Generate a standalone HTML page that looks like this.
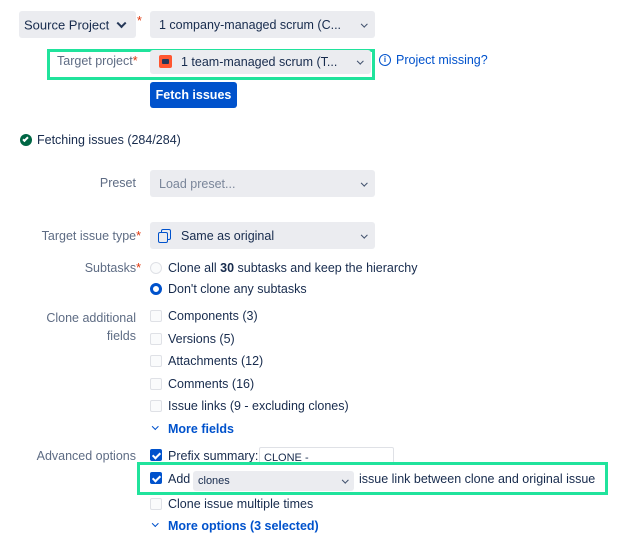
<!DOCTYPE html>
<html><head><meta charset="utf-8"><style>
*{box-sizing:border-box;margin:0;padding:0}
body{width:636px;height:543px;background:#fff;font-family:"Liberation Sans",sans-serif;font-size:12.5px;color:#172b4d;position:relative;overflow:hidden}
.a{position:absolute;white-space:nowrap}
.lbl{position:absolute;color:#5e6c84;text-align:right;white-space:nowrap}
.sel{position:absolute;background:#ebecf0;border-radius:3px}
.sel .t{position:absolute;left:9px;top:50%;transform:translateY(-50%)}
.chev{position:absolute;right:9px;top:50%;width:4.5px;height:4.5px;border-right:1.6px solid #42526e;border-bottom:1.6px solid #42526e;transform:translateY(-75%) rotate(45deg)}
.req{color:#de350b}
.cb{position:absolute;width:12px;height:12px;border:1px solid #dfe1e6;border-radius:2px;background:#fafbfc}
.cbx{position:absolute;width:12px;height:12px;border-radius:2px;background:#0052cc}
.cbx:after{content:"";position:absolute;left:4px;top:1.5px;width:3px;height:6px;border-right:2px solid #fff;border-bottom:2px solid #fff;transform:rotate(45deg)}
.blue{color:#0052cc}
.bold{font-weight:bold}
.g{position:absolute;border:3px solid #20e39c}
</style></head><body>

<div class="sel" style="left:19px;top:11px;width:117px;height:27px"><span class="t" style="left:5px;font-size:13px">Source Project</span><div class="chev" style="right:11px;width:7px;height:7px;border-width:2.2px;border-color:#253858"></div></div>
<span class="a req" style="left:137px;top:14px">*</span>
<div class="sel" style="left:150px;top:11px;width:225px;height:27px"><span class="t">1 company-managed scrum (C...</span><div class="chev"></div></div>

<div class="g" style="left:47px;top:49px;width:328px;height:31px"></div>
<span class="a" style="left:57px;top:54px;color:#5e6c84">Target project<span class="req">*</span></span>
<div class="sel" style="left:150px;top:50px;width:221px;height:24px">
<div style="position:absolute;left:9px;top:5px;width:13px;height:13px;background:#ff5630;border-radius:2px"><div style="position:absolute;left:3px;top:4px;width:7px;height:5px;background:#253858;border-radius:1px"></div></div>
<span class="t" style="left:31px">1 team-managed scrum (T...</span><div class="chev"></div></div>
<div class="a" style="left:379px;top:54px;width:12px;height:12px;border:1.3px solid #0052cc;border-radius:50%;font-size:8px;line-height:10px;text-align:center;color:#0052cc;font-weight:bold">i</div>
<span class="a blue" style="left:396px;top:53px">Project missing?</span>

<div class="a" style="left:150px;top:82px;width:87px;height:26px;background:#0052cc;border-radius:3px;color:#fff;font-weight:bold;text-align:center;line-height:26px">Fetch issues</div>

<div class="a" style="left:20px;top:134px;width:12px;height:12px;border-radius:50%;background:#006644"><div style="position:absolute;left:4px;top:2px;width:3px;height:6px;border-right:2px solid #fff;border-bottom:2px solid #fff;transform:rotate(45deg)"></div></div>
<span class="a" style="left:37px;top:133px">Fetching issues (284/284)</span>

<span class="lbl" style="right:500px;top:176px">Preset</span>
<div class="sel" style="left:150px;top:170px;width:225px;height:27px"><span class="t" style="color:#7a869a">Load preset...</span><div class="chev"></div></div>

<span class="lbl" style="right:495px;top:229px">Target issue type<span class="req">*</span></span>
<div class="sel" style="left:150px;top:222px;width:225px;height:27px">
<div style="position:absolute;left:11px;top:7px;width:10px;height:11px;border:1.5px solid #0052cc;border-radius:2px"></div>
<div style="position:absolute;left:8px;top:10px;width:10px;height:11px;border:1.5px solid #0052cc;border-radius:2px;background:#ebecf0"></div>
<span class="t" style="left:31px">Same as original</span><div class="chev"></div></div>

<span class="lbl" style="right:495px;top:261px">Subtasks<span class="req">*</span></span>
<div class="a" style="left:150px;top:262px;width:12px;height:12px;border:1px solid #dfe1e6;border-radius:50%;background:#fafbfc"></div>
<span class="a" style="left:168px;top:261px">Clone all <b>30</b> subtasks and keep the hierarchy</span>
<div class="a" style="left:150px;top:283px;width:12px;height:12px;border:3.5px solid #0052cc;border-radius:50%;background:#fff"></div>
<span class="a" style="left:168px;top:282px">Don't clone any subtasks</span>

<span class="lbl" style="right:500px;top:309px;line-height:18px">Clone additional<br>fields</span>
<div class="cb" style="left:150px;top:310px"></div><span class="a" style="left:168px;top:309px">Components (3)</span>
<div class="cb" style="left:150px;top:333px"></div><span class="a" style="left:168px;top:332px">Versions (5)</span>
<div class="cb" style="left:150px;top:355px"></div><span class="a" style="left:168px;top:354px">Attachments (12)</span>
<div class="cb" style="left:150px;top:378px"></div><span class="a" style="left:168px;top:377px">Comments (16)</span>
<div class="cb" style="left:150px;top:400px"></div><span class="a" style="left:168px;top:399px">Issue links (9 - excluding clones)</span>
<div class="a" style="left:153px;top:424px;width:4.5px;height:4.5px;border-right:1.6px solid #0052cc;border-bottom:1.6px solid #0052cc;transform:rotate(45deg)"></div>
<span class="a blue bold" style="left:168px;top:422px">More fields</span>

<span class="lbl" style="right:500px;top:449px">Advanced options</span>
<div class="cbx" style="left:150px;top:449px"></div>
<span class="a" style="left:168px;top:449px">Prefix summary:</span>
<div class="a" style="left:259px;top:447px;width:135px;height:20px;border:1px solid #dfe1e6;border-radius:2px;font-size:11px;padding:4px 0 0 4px">CLONE -</div>

<div class="g" style="left:137px;top:462px;width:471px;height:33px;background:#fff"></div>
<div class="cbx" style="left:150px;top:472px"></div>
<span class="a" style="left:168px;top:472px">Add</span>
<div class="sel" style="left:193px;top:471px;width:161px;height:20px"><span class="t" style="left:5px;font-size:11px">clones</span><div class="chev" style="right:7px"></div></div>
<span class="a" style="left:359px;top:472px">issue link between clone and original issue</span>

<div class="cb" style="left:150px;top:498px"></div><span class="a" style="left:168px;top:497px">Clone issue multiple times</span>
<div class="a" style="left:153px;top:521px;width:4.5px;height:4.5px;border-right:1.6px solid #0052cc;border-bottom:1.6px solid #0052cc;transform:rotate(45deg)"></div>
<span class="a blue bold" style="left:168px;top:519px">More options (3 selected)</span>
</body></html>
